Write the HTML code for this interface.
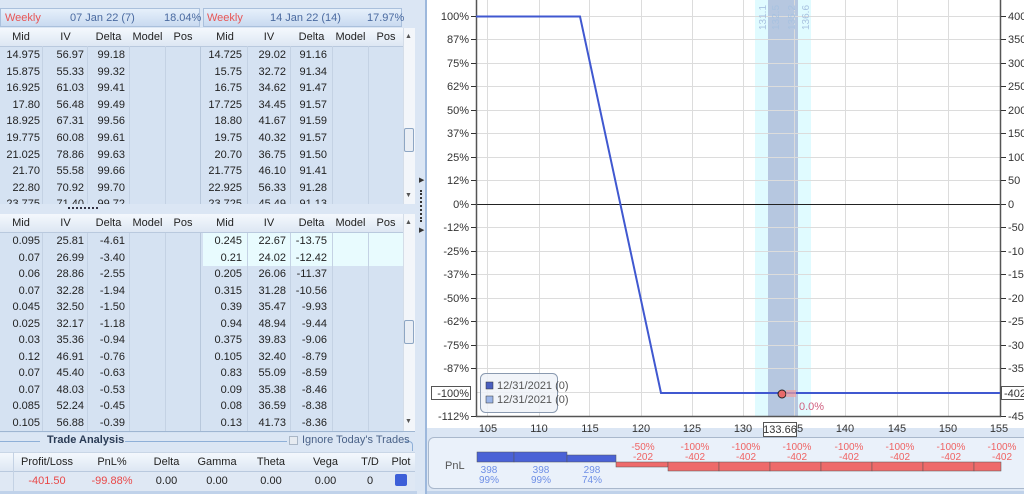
<!DOCTYPE html>
<html><head><meta charset="utf-8"><style>
*{box-sizing:border-box;margin:0;padding:0}
body{width:1024px;height:494px;overflow:hidden;background:#dbe6f4;font-family:"Liberation Sans",sans-serif;font-size:11px;color:#222;position:relative}
.a{position:absolute}
.hdr{position:absolute;height:19px;background:linear-gradient(#f4f8fd,#dde7f3);border-bottom:1px solid #b9c9de;font-size:11px}
.hdr span{position:absolute;top:3px;text-align:center}
.row{position:absolute;height:16.6px;left:0;width:403px}
.row span{position:absolute;top:2px;text-align:right}
.grid{position:absolute;background:#d5e2f2}
.tl{position:absolute;border-right:1px solid #c4d2e4}
.wk{position:absolute;height:19px;top:8px;background:linear-gradient(#e6f0fb,#c9daf0);border:1px solid #aac0dc;font-size:11px}
.wk span{position:absolute;top:3px}
.sb{position:absolute;background:#f3f6fa;border-left:1px solid #d4dde8}
</style></head><body>

<!-- top week headers -->
<div class="wk" style="left:0;width:200px"><span style="left:4px;color:#e85555">Weekly</span><span style="left:69px;color:#4a6aa0">07 Jan 22 (7)</span><span style="left:163px;color:#4a6aa0">18.04%</span></div>
<div class="wk" style="left:203px;width:199px"><span style="left:3px;color:#e85555">Weekly</span><span style="left:66px;color:#4a6aa0">14 Jan 22 (14)</span><span style="left:163px;color:#4a6aa0">17.97%</span></div>

<!-- upper table -->
<div class="grid" style="left:0;top:46px;width:403px;height:158px"></div>
<div class="hdr" style="left:0;top:28px;width:403px">
<span style="left:0;width:42px">Mid</span><span style="left:44px;width:43px">IV</span><span style="left:88px;width:41px">Delta</span><span style="left:130px;width:35px">Model</span><span style="left:166px;width:34px">Pos</span>
<span style="left:203px;width:44px">Mid</span><span style="left:248px;width:42px">IV</span><span style="left:291px;width:41px">Delta</span><span style="left:333px;width:35px">Model</span><span style="left:369px;width:34px">Pos</span></div>
<div class="tl" style="left:42px;top:46px;height:158px"></div><div class="tl" style="left:87px;top:46px;height:158px"></div><div class="tl" style="left:129px;top:46px;height:158px"></div><div class="tl" style="left:165px;top:46px;height:158px"></div><div class="tl" style="left:200px;top:46px;height:158px;border-color:#b8c8dc"></div><div class="tl" style="left:247px;top:46px;height:158px"></div><div class="tl" style="left:290px;top:46px;height:158px"></div><div class="tl" style="left:332px;top:46px;height:158px"></div><div class="tl" style="left:368px;top:46px;height:158px"></div>
<div style="position:absolute;left:0;top:47px;width:403px;height:157px;overflow:hidden">
<div class="row" style="top:0"><span style="right:363px">14.975</span><span style="right:319px">56.97</span><span style="right:278px">99.18</span><span style="right:161px">14.725</span><span style="right:117px">29.02</span><span style="right:76px">91.16</span></div>
<div class="row" style="top:16.6px"><span style="right:363px">15.875</span><span style="right:319px">55.33</span><span style="right:278px">99.32</span><span style="right:161px">15.75</span><span style="right:117px">32.72</span><span style="right:76px">91.34</span></div>
<div class="row" style="top:33.2px"><span style="right:363px">16.925</span><span style="right:319px">61.03</span><span style="right:278px">99.41</span><span style="right:161px">16.75</span><span style="right:117px">34.62</span><span style="right:76px">91.47</span></div>
<div class="row" style="top:49.8px"><span style="right:363px">17.80</span><span style="right:319px">56.48</span><span style="right:278px">99.49</span><span style="right:161px">17.725</span><span style="right:117px">34.45</span><span style="right:76px">91.57</span></div>
<div class="row" style="top:66.4px"><span style="right:363px">18.925</span><span style="right:319px">67.31</span><span style="right:278px">99.56</span><span style="right:161px">18.80</span><span style="right:117px">41.67</span><span style="right:76px">91.59</span></div>
<div class="row" style="top:83px"><span style="right:363px">19.775</span><span style="right:319px">60.08</span><span style="right:278px">99.61</span><span style="right:161px">19.75</span><span style="right:117px">40.32</span><span style="right:76px">91.57</span></div>
<div class="row" style="top:99.6px"><span style="right:363px">21.025</span><span style="right:319px">78.86</span><span style="right:278px">99.63</span><span style="right:161px">20.70</span><span style="right:117px">36.75</span><span style="right:76px">91.50</span></div>
<div class="row" style="top:116.2px"><span style="right:363px">21.70</span><span style="right:319px">55.58</span><span style="right:278px">99.66</span><span style="right:161px">21.775</span><span style="right:117px">46.10</span><span style="right:76px">91.41</span></div>
<div class="row" style="top:132.8px"><span style="right:363px">22.80</span><span style="right:319px">70.92</span><span style="right:278px">99.70</span><span style="right:161px">22.925</span><span style="right:117px">56.33</span><span style="right:76px">91.28</span></div>
<div class="row" style="top:149.4px"><span style="right:363px">23.775</span><span style="right:319px">71.40</span><span style="right:278px">99.72</span><span style="right:161px">23.725</span><span style="right:117px">45.49</span><span style="right:76px">91.13</span></div>
</div>
<div class="sb" style="left:403px;top:28px;width:12px;height:176px"></div>
<div class="a" style="left:405px;top:33px;font-size:7px;color:#555">▲</div>
<div class="a" style="left:405px;top:192px;font-size:7px;color:#555">▼</div>
<div class="a" style="left:404px;top:128px;width:10px;height:24px;border:1px solid #8da6c4;border-radius:2px;background:#e9eef5"></div>
<div class="a" style="left:68px;top:207px;width:30px;border-top:2px dotted #334"></div>

<!-- lower table -->
<div class="grid" style="left:0;top:233px;width:403px;height:200px"></div>
<div class="a" style="left:203px;top:233px;width:200px;height:33px;background:#e8fbfe"></div>
<div class="hdr" style="left:0;top:214px;width:403px">
<span style="left:0;width:42px">Mid</span><span style="left:44px;width:43px">IV</span><span style="left:88px;width:41px">Delta</span><span style="left:130px;width:35px">Model</span><span style="left:166px;width:34px">Pos</span>
<span style="left:203px;width:44px">Mid</span><span style="left:248px;width:42px">IV</span><span style="left:291px;width:41px">Delta</span><span style="left:333px;width:35px">Model</span><span style="left:369px;width:34px">Pos</span></div>
<div class="tl" style="left:42px;top:233px;height:198px"></div><div class="tl" style="left:87px;top:233px;height:198px"></div><div class="tl" style="left:129px;top:233px;height:198px"></div><div class="tl" style="left:165px;top:233px;height:198px"></div><div class="tl" style="left:200px;top:233px;height:198px;border-color:#b8c8dc"></div><div class="tl" style="left:247px;top:233px;height:198px"></div><div class="tl" style="left:290px;top:233px;height:198px"></div><div class="tl" style="left:332px;top:233px;height:198px"></div><div class="tl" style="left:368px;top:233px;height:198px"></div>
<div style="position:absolute;left:0;top:233px;width:403px;height:198px;overflow:hidden">
<div class="row" style="top:0"><span style="right:363px">0.095</span><span style="right:319px">25.81</span><span style="right:278px">-4.61</span><span style="right:161px">0.245</span><span style="right:117px">22.67</span><span style="right:76px">-13.75</span></div>
<div class="row" style="top:16.5px"><span style="right:363px">0.07</span><span style="right:319px">26.99</span><span style="right:278px">-3.40</span><span style="right:161px">0.21</span><span style="right:117px">24.02</span><span style="right:76px">-12.42</span></div>
<div class="row" style="top:33px"><span style="right:363px">0.06</span><span style="right:319px">28.86</span><span style="right:278px">-2.55</span><span style="right:161px">0.205</span><span style="right:117px">26.06</span><span style="right:76px">-11.37</span></div>
<div class="row" style="top:49.5px"><span style="right:363px">0.07</span><span style="right:319px">32.28</span><span style="right:278px">-1.94</span><span style="right:161px">0.315</span><span style="right:117px">31.28</span><span style="right:76px">-10.56</span></div>
<div class="row" style="top:66px"><span style="right:363px">0.045</span><span style="right:319px">32.50</span><span style="right:278px">-1.50</span><span style="right:161px">0.39</span><span style="right:117px">35.47</span><span style="right:76px">-9.93</span></div>
<div class="row" style="top:82.5px"><span style="right:363px">0.025</span><span style="right:319px">32.17</span><span style="right:278px">-1.18</span><span style="right:161px">0.94</span><span style="right:117px">48.94</span><span style="right:76px">-9.44</span></div>
<div class="row" style="top:99px"><span style="right:363px">0.03</span><span style="right:319px">35.36</span><span style="right:278px">-0.94</span><span style="right:161px">0.375</span><span style="right:117px">39.83</span><span style="right:76px">-9.06</span></div>
<div class="row" style="top:115.5px"><span style="right:363px">0.12</span><span style="right:319px">46.91</span><span style="right:278px">-0.76</span><span style="right:161px">0.105</span><span style="right:117px">32.40</span><span style="right:76px">-8.79</span></div>
<div class="row" style="top:132px"><span style="right:363px">0.07</span><span style="right:319px">45.40</span><span style="right:278px">-0.63</span><span style="right:161px">0.83</span><span style="right:117px">55.09</span><span style="right:76px">-8.59</span></div>
<div class="row" style="top:148.5px"><span style="right:363px">0.07</span><span style="right:319px">48.03</span><span style="right:278px">-0.53</span><span style="right:161px">0.09</span><span style="right:117px">35.38</span><span style="right:76px">-8.46</span></div>
<div class="row" style="top:165px"><span style="right:363px">0.085</span><span style="right:319px">52.24</span><span style="right:278px">-0.45</span><span style="right:161px">0.08</span><span style="right:117px">36.59</span><span style="right:76px">-8.38</span></div>
<div class="row" style="top:181.5px"><span style="right:363px">0.105</span><span style="right:319px">56.88</span><span style="right:278px">-0.39</span><span style="right:161px">0.13</span><span style="right:117px">41.73</span><span style="right:76px">-8.36</span></div>
</div>
<div class="a" style="left:0;top:431px;width:415px;border-top:1px solid #9fb6d2"></div>
<div class="sb" style="left:403px;top:214px;width:12px;height:217px"></div>
<div class="a" style="left:405px;top:219px;font-size:7px;color:#555">▲</div>
<div class="a" style="left:405px;top:418px;font-size:7px;color:#555">▼</div>
<div class="a" style="left:404px;top:320px;width:10px;height:24px;border:1px solid #8da6c4;border-radius:2px;background:#e9eef5"></div>

<!-- trade analysis -->
<div class="a" style="left:0;top:441px;width:40px;border-top:1px solid #8fb0d8"></div>
<div class="a" style="left:125px;top:441px;width:162px;border-top:1px solid #8fb0d8"></div>
<div class="a" style="left:405px;top:441px;width:8px;height:10px;border-top:1px solid #8fb0d8;border-right:1px solid #8fb0d8;border-top-right-radius:4px"></div>
<div class="a" style="left:47px;top:434px;font-weight:bold;color:#2a3b55;font-size:11px">Trade Analysis</div>
<div class="a" style="left:289px;top:436px;width:9px;height:9px;border:1px solid #a9b6c6;background:#e6ebf1"></div>
<div class="a" style="left:302px;top:434px;color:#4a6288;font-size:11px">Ignore Today's Trades</div>
<div class="a" style="left:0;top:452px;width:415px;height:20px;background:linear-gradient(#f4f8fd,#dde7f3);border-bottom:1px solid #b9c9de;border-top:1px solid #c9d6e6"></div>
<div class="a" style="left:0;top:472px;width:415px;height:19px;background:#dfe8f4"></div>
<div class="a" style="left:0;top:491px;width:1024px;height:3px;background:#c0d2ea"></div>
<div class="a" style="top:456px;left:0;width:415px;height:34px;font-size:11px">
<span class="a" style="left:13px;width:68px;text-align:center">Profit/Loss</span><span class="a" style="left:81px;width:62px;text-align:center">PnL%</span><span class="a" style="left:143px;width:47px;text-align:center">Delta</span><span class="a" style="left:190px;width:54px;text-align:center">Gamma</span><span class="a" style="left:244px;width:54px;text-align:center">Theta</span><span class="a" style="left:298px;width:55px;text-align:center">Vega</span><span class="a" style="left:353px;width:34px;text-align:center">T/D</span><span class="a" style="left:387px;width:28px;text-align:center">Plot</span>
<span class="a" style="top:19px;left:13px;width:68px;text-align:center;color:#e94848">-401.50</span><span class="a" style="top:19px;left:81px;width:62px;text-align:center;color:#e94848">-99.88%</span><span class="a" style="top:19px;left:143px;width:47px;text-align:center">0.00</span><span class="a" style="top:19px;left:190px;width:54px;text-align:center">0.00</span><span class="a" style="top:19px;left:244px;width:54px;text-align:center">0.00</span><span class="a" style="top:19px;left:298px;width:55px;text-align:center">0.00</span><span class="a" style="top:19px;left:353px;width:34px;text-align:center">0</span></div>
<div class="a" style="left:395px;top:474px;width:12px;height:12px;border-radius:2px;background:#3d5fd8"></div>
<div class="a" style="left:13px;top:452px;height:39px;border-left:1px solid #c4d2e4"></div>

<!-- splitter -->
<div class="a" style="left:417px;top:0;width:8px;height:494px;background:#dbe6f4"></div>
<div class="a" style="left:419px;top:176px;font-size:7px;color:#333">▶</div>
<div class="a" style="left:420px;top:190px;height:32px;border-left:2px dotted #333"></div>
<div class="a" style="left:419px;top:226px;font-size:7px;color:#333">▶</div>
<div class="a" style="left:425px;top:0;width:2px;height:494px;background:#9db8dc"></div>

<!-- chart -->
<svg class="a" style="left:0;top:0" width="1024" height="494" font-family="Liberation Sans, sans-serif" font-size="11">
<rect x="427" y="0" width="597" height="428" fill="#fff"/>
<rect x="755" y="0" width="56" height="416" fill="#e0fbff"/>
<rect x="768" y="0" width="30" height="416" fill="#b6c7e0"/>
<g stroke="#dcdcdc" stroke-width="1">
<line x1="476" y1="16.5" x2="1000" y2="16.5"/><line x1="476" y1="39.5" x2="1000" y2="39.5"/><line x1="476" y1="63.5" x2="1000" y2="63.5"/><line x1="476" y1="86.5" x2="1000" y2="86.5"/><line x1="476" y1="110.5" x2="1000" y2="110.5"/><line x1="476" y1="133.5" x2="1000" y2="133.5"/><line x1="476" y1="157.5" x2="1000" y2="157.5"/><line x1="476" y1="180.5" x2="1000" y2="180.5"/><line x1="476" y1="227.5" x2="1000" y2="227.5"/><line x1="476" y1="251.5" x2="1000" y2="251.5"/><line x1="476" y1="274.5" x2="1000" y2="274.5"/><line x1="476" y1="298.5" x2="1000" y2="298.5"/><line x1="476" y1="321.5" x2="1000" y2="321.5"/><line x1="476" y1="345.5" x2="1000" y2="345.5"/><line x1="476" y1="368.5" x2="1000" y2="368.5"/><line x1="476" y1="392.5" x2="1000" y2="392.5"/>
<line x1="487.5" y1="0" x2="487.5" y2="416"/><line x1="539.5" y1="0" x2="539.5" y2="416"/><line x1="589.5" y1="0" x2="589.5" y2="416"/><line x1="641.5" y1="0" x2="641.5" y2="416"/><line x1="692.5" y1="0" x2="692.5" y2="416"/><line x1="743.5" y1="0" x2="743.5" y2="416"/><line x1="794.5" y1="0" x2="794.5" y2="416"/><line x1="845.5" y1="0" x2="845.5" y2="416"/><line x1="897.5" y1="0" x2="897.5" y2="416"/><line x1="948.5" y1="0" x2="948.5" y2="416"/>
</g>
<line x1="476" y1="204.5" x2="1000" y2="204.5" stroke="#222"/>
<line x1="476.5" y1="0" x2="476.5" y2="417" stroke="#555" stroke-width="1.5"/>
<line x1="1000.5" y1="0" x2="1000.5" y2="417" stroke="#555" stroke-width="1.5"/>
<line x1="476" y1="416.5" x2="1001" y2="416.5" stroke="#555" stroke-width="1.5"/>
<g fill="#333" text-anchor="end">
<text x="469" y="20">100%</text><text x="469" y="43">87%</text><text x="469" y="67">75%</text><text x="469" y="90">62%</text><text x="469" y="114">50%</text><text x="469" y="137">37%</text><text x="469" y="161">25%</text><text x="469" y="184">12%</text><text x="469" y="208">0%</text><text x="469" y="231">-12%</text><text x="469" y="255">-25%</text><text x="469" y="278">-37%</text><text x="469" y="302">-50%</text><text x="469" y="325">-62%</text><text x="469" y="349">-75%</text><text x="469" y="372">-87%</text><text x="469" y="420">-112%</text></g>
<g stroke="#333"><line x1="471" y1="16.5" x2="476" y2="16.5"/><line x1="471" y1="39.5" x2="476" y2="39.5"/><line x1="471" y1="63.5" x2="476" y2="63.5"/><line x1="471" y1="86.5" x2="476" y2="86.5"/><line x1="471" y1="110.5" x2="476" y2="110.5"/><line x1="471" y1="133.5" x2="476" y2="133.5"/><line x1="471" y1="157.5" x2="476" y2="157.5"/><line x1="471" y1="180.5" x2="476" y2="180.5"/><line x1="471" y1="204.5" x2="476" y2="204.5"/><line x1="471" y1="227.5" x2="476" y2="227.5"/><line x1="471" y1="251.5" x2="476" y2="251.5"/><line x1="471" y1="274.5" x2="476" y2="274.5"/><line x1="471" y1="298.5" x2="476" y2="298.5"/><line x1="471" y1="321.5" x2="476" y2="321.5"/><line x1="471" y1="345.5" x2="476" y2="345.5"/><line x1="471" y1="368.5" x2="476" y2="368.5"/><line x1="471" y1="416.5" x2="476" y2="416.5"/>
<line x1="1001" y1="16.5" x2="1006" y2="16.5"/><line x1="1001" y1="39.5" x2="1006" y2="39.5"/><line x1="1001" y1="63.5" x2="1006" y2="63.5"/><line x1="1001" y1="86.5" x2="1006" y2="86.5"/><line x1="1001" y1="110.5" x2="1006" y2="110.5"/><line x1="1001" y1="133.5" x2="1006" y2="133.5"/><line x1="1001" y1="157.5" x2="1006" y2="157.5"/><line x1="1001" y1="180.5" x2="1006" y2="180.5"/><line x1="1001" y1="204.5" x2="1006" y2="204.5"/><line x1="1001" y1="227.5" x2="1006" y2="227.5"/><line x1="1001" y1="251.5" x2="1006" y2="251.5"/><line x1="1001" y1="274.5" x2="1006" y2="274.5"/><line x1="1001" y1="298.5" x2="1006" y2="298.5"/><line x1="1001" y1="321.5" x2="1006" y2="321.5"/><line x1="1001" y1="345.5" x2="1006" y2="345.5"/><line x1="1001" y1="368.5" x2="1006" y2="368.5"/><line x1="1001" y1="416.5" x2="1006" y2="416.5"/></g>
<g fill="#333"><text x="1008" y="20">400</text><text x="1008" y="43">350</text><text x="1008" y="67">300</text><text x="1008" y="90">250</text><text x="1008" y="114">200</text><text x="1008" y="137">150</text><text x="1008" y="161">100</text><text x="1008" y="184">50</text><text x="1008" y="208">0</text><text x="1008" y="231">-50</text><text x="1008" y="255">-100</text><text x="1008" y="278">-150</text><text x="1008" y="302">-200</text><text x="1008" y="325">-250</text><text x="1008" y="349">-300</text><text x="1008" y="372">-350</text><text x="1008" y="420">-450</text></g>
<g fill="#333" text-anchor="middle"><text x="488" y="432">105</text><text x="539" y="432">110</text><text x="590" y="432">115</text><text x="641" y="432">120</text><text x="692" y="432">125</text><text x="743" y="432">130</text><text x="794" y="432">135</text><text x="845" y="432">140</text><text x="897" y="432">145</text><text x="948" y="432">150</text><text x="999" y="432">155</text></g>
<rect x="763.5" y="422.5" width="33" height="14" fill="#fff" stroke="#555"/>
<text x="780" y="433" text-anchor="middle" fill="#333">133.66</text>
<g fill="#a8c2e0" font-size="10"><text transform="translate(766,30) rotate(-90)">131.1</text><text transform="translate(779,30) rotate(-90)">132.5</text><text transform="translate(795,30) rotate(-90)">135.2</text><text transform="translate(809,30) rotate(-90)">136.6</text></g>
<polyline points="476,16.5 580,16.5 661,393 1000,393" fill="none" stroke="#4058d0" stroke-width="2"/>
<rect x="431.5" y="386.5" width="39" height="13" fill="#fff" stroke="#555"/>
<text x="469" y="397" text-anchor="end" fill="#333">-100%</text>
<rect x="1001.5" y="386.5" width="30" height="13" fill="#fff" stroke="#555"/>
<text x="1004" y="397" fill="#333">-402</text>
<rect x="480.5" y="373.5" width="77" height="39" rx="5" fill="#eef2f8" fill-opacity="0.85" stroke="#8a9ab0"/>
<rect x="486" y="382" width="7" height="7" fill="#4a5fbf" stroke="#333" stroke-width="0.5"/>
<rect x="486" y="396" width="7" height="7" fill="#9bb5e8" stroke="#333" stroke-width="0.5"/>
<text x="497" y="389" fill="#555">12/31/2021 (0)</text>
<text x="497" y="403" fill="#555">12/31/2021 (0)</text>
<circle cx="782" cy="394" r="4" fill="#e86a6a" stroke="#222"/>
<rect x="786" y="390" width="10" height="7" fill="#f0a0a0" opacity="0.7"/>
<text x="799" y="410" fill="#d06080">0.0%</text>
</svg>

<!-- PnL panel -->
<div class="a" style="left:428px;top:437px;width:605px;height:52px;border:1px solid #a9b8cc;border-radius:6px;background:#eaf1fa"></div>
<div class="a" style="left:445px;top:460px;color:#555">PnL</div>
<svg class="a" style="left:0;top:0" width="1024" height="494" font-family="Liberation Sans, sans-serif" font-size="10">
<rect x="477" y="452" width="37" height="10" fill="#4a62d6" stroke="#555" stroke-width="0.5"/>
<rect x="514" y="452" width="53" height="10" fill="#4a62d6" stroke="#555" stroke-width="0.5"/>
<rect x="567" y="455" width="49" height="7" fill="#4a62d6" stroke="#555" stroke-width="0.5"/>
<rect x="616" y="462" width="52" height="5" fill="#ee6a6a" stroke="#555" stroke-width="0.5"/>
<g fill="#ee6a6a" stroke="#555" stroke-width="0.5"><rect x="668" y="462" width="51" height="9"/><rect x="719" y="462" width="51" height="9"/><rect x="770" y="462" width="51" height="9"/><rect x="821" y="462" width="51" height="9"/><rect x="872" y="462" width="51" height="9"/><rect x="923" y="462" width="51" height="9"/><rect x="974" y="462" width="27" height="9"/></g>
<g fill="#6e8fe6" text-anchor="middle"><text x="489" y="473">398</text><text x="489" y="483">99%</text><text x="541" y="473">398</text><text x="541" y="483">99%</text><text x="592" y="473">298</text><text x="592" y="483">74%</text></g>
<g fill="#ef6464" text-anchor="middle"><text x="643" y="450">-50%</text><text x="643" y="460">-202</text><text x="695" y="450">-100%</text><text x="695" y="460">-402</text><text x="746" y="450">-100%</text><text x="746" y="460">-402</text><text x="797" y="450">-100%</text><text x="797" y="460">-402</text><text x="849" y="450">-100%</text><text x="849" y="460">-402</text><text x="900" y="450">-100%</text><text x="900" y="460">-402</text><text x="951" y="450">-100%</text><text x="951" y="460">-402</text><text x="1002" y="450">-100%</text><text x="1002" y="460">-402</text></g>
</svg>
</body></html>
